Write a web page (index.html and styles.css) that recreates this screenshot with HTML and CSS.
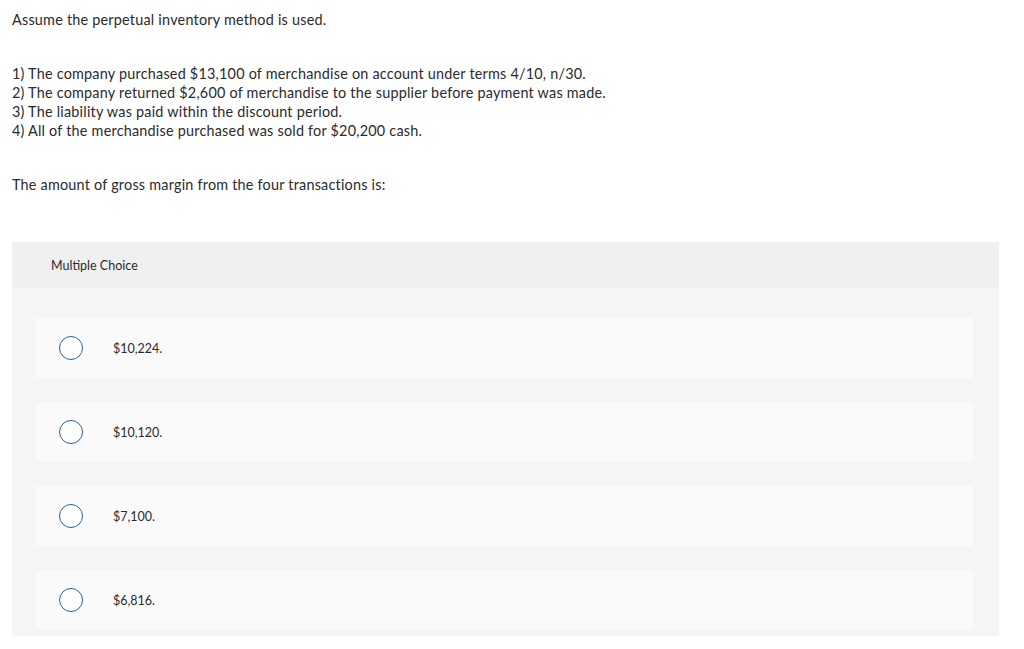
FILE: index.html
```html
<!DOCTYPE html>
<html>
<head>
<meta charset="utf-8">
<link rel="stylesheet" href="styles.css">
</head>
<body>
<div class="question">
  <p class="intro">Assume the perpetual inventory method is used.</p>
  <p class="list">1) The company purchased $13,100 of merchandise on account under terms 4/10, n/30.<br>
2) The company returned $2,600 of merchandise to the supplier before payment was made.<br>
3) The liability was paid within the discount period.<br>
4) All of the merchandise purchased was sold for $20,200 cash.</p>
  <p class="ask">The amount of gross margin from the four transactions is:</p>
</div>
<div class="panel">
  <div class="panel-head">Multiple Choice</div>
  <div class="options">
    <div class="option"><span class="radio"></span><span class="label">$10,224.</span></div>
    <div class="option"><span class="radio"></span><span class="label">$10,120.</span></div>
    <div class="option"><span class="radio"></span><span class="label">$7,100.</span></div>
    <div class="option"><span class="radio"></span><span class="label">$6,816.</span></div>
  </div>
</div>
</body>
</html>
```
FILE: styles.css
```css
html, body { margin: 0; padding: 0; background: #fff; }
body {
  font-family: Lato, "Liberation Sans", sans-serif;
  color: #2b2b2b;
  font-size: 14.4px;
  letter-spacing: 0.22px;
  line-height: 19px;
}
.question { padding: 0 12px; }
.question p { margin: 0; }
.intro { padding-top: 10px; }
.list { margin-top: 35px !important; }
.ask { margin-top: 35px !important; }
.panel {
  margin: 48px 25px 0 12px;
  background: #f5f5f5;
  padding-bottom: 6px;
}
.panel-head {
  background: #f0f0f0;
  height: 46px;
  display: flex;
  align-items: center;
  padding-left: 39px;
  font-size: 12.5px;
  letter-spacing: 0;
}
.options {
  padding: 30px 26px 0 24px;
  display: flex;
  flex-direction: column;
  gap: 24px;
}
.option {
  background: #fafafa;
  height: 60px;
  display: flex;
  align-items: center;
  padding-left: 23px;
  border-radius: 2px;
  font-size: 12.5px;
  letter-spacing: 0;
}
.radio {
  box-sizing: border-box;
  width: 24px;
  height: 24px;
  border: 1.5px solid #2b6198;
  border-radius: 50%;
  background: #fff;
  flex: none;
}
.label { margin-left: 30px; }
```
